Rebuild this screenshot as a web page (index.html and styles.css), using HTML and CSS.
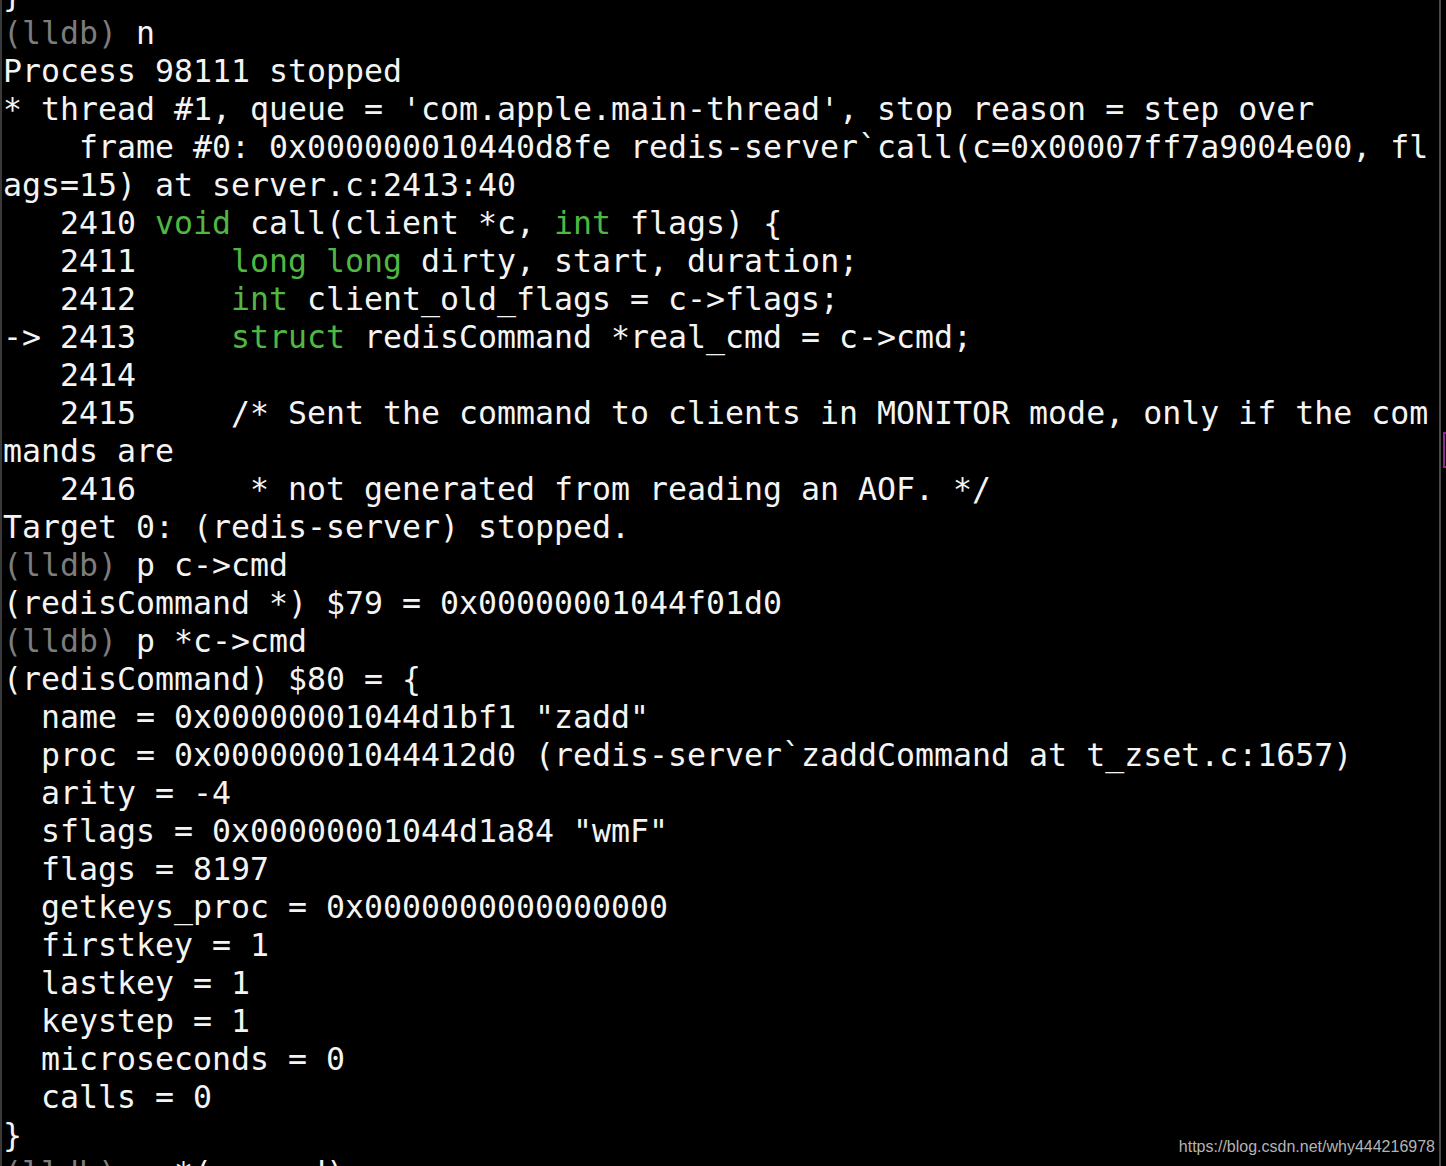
FILE: index.html
```html
<!DOCTYPE html>
<html>
<head>
<meta charset="utf-8">
<link rel="stylesheet" href="styles.css">
</head>
<body>
<div class="screen">
  <div class="pane">
<pre class="term">}
<span class="prompt">(lldb)</span> n
Process 98111 stopped
* thread #1, queue = 'com.apple.main-thread', stop reason = step over
    frame #0: 0x000000010440d8fe redis-server`call(c=0x00007ff7a9004e00, fl
ags=15) at server.c:2413:40
   2410 <span class="kw">void</span> call(client *c, <span class="kw">int</span> flags) {
   2411     <span class="kw">long</span> <span class="kw">long</span> dirty, start, duration;
   2412     <span class="kw">int</span> client_old_flags = c-&gt;flags;
-&gt; 2413     <span class="kw">struct</span> redisCommand *real_cmd = c-&gt;cmd;
   2414
   2415     /* Sent the command to clients in MONITOR mode, only if the com
mands are
   2416      * not generated from reading an AOF. */
Target 0: (redis-server) stopped.
<span class="prompt">(lldb)</span> p c-&gt;cmd
(redisCommand *) $79 = 0x00000001044f01d0
<span class="prompt">(lldb)</span> p *c-&gt;cmd
(redisCommand) $80 = {
  name = 0x00000001044d1bf1 "zadd"
  proc = 0x00000001044412d0 (redis-server`zaddCommand at t_zset.c:1657)
  arity = -4
  sflags = 0x00000001044d1a84 "wmF"
  flags = 8197
  getkeys_proc = 0x0000000000000000
  firstkey = 1
  lastkey = 1
  keystep = 1
  microseconds = 0
  calls = 0
}
<span class="prompt">(lldb)</span> p *(c-&gt;cmd)</pre>
  </div>
  <div class="divider"></div>
  <div class="side">
<pre class="term side-term">
(
</pre>
    <div class="cursor"></div>
  </div>
  <div class="watermark">https://blog.csdn.net/why444216978</div>
</div>
</body>
</html>
```

FILE: styles.css
```css
html, body {
  margin: 0;
  padding: 0;
  background: #000;
}
.screen {
  position: relative;
  width: 1446px;
  height: 1166px;
  overflow: hidden;
  display: flex;
  background: #000;
}
.pane {
  width: 1437px;
  flex: none;
  border-left: 2px solid #3a3a3a;
  overflow: hidden;
}
.term {
  margin: -24px 0 0 0;
  padding: 0 0 0 1px;
  font-family: "DejaVu Sans Mono", monospace;
  font-size: 31.57px;
  line-height: 38px;
  color: #f4f4f4;
  white-space: pre;
}
.prompt {
  color: #7c7c7c;
}
.kw {
  color: #4fb742;
}
.divider {
  width: 2px;
  flex: none;
  background: #4a4a4a;
}
.side {
  position: relative;
  flex: 1;
  overflow: hidden;
}
.side-term {
  padding-left: 0;
  color: #cfcfcf;
}
.cursor {
  position: absolute;
  left: 2px;
  top: 432px;
  width: 10px;
  height: 36px;
  border: 2px solid #8d2a8f;
  box-sizing: border-box;
}
.watermark {
  position: absolute;
  right: 11px;
  bottom: 11px;
  font-family: "Liberation Sans", Arial, sans-serif;
  font-size: 16px;
  line-height: 16px;
  color: #b4b4b4;
}
```
